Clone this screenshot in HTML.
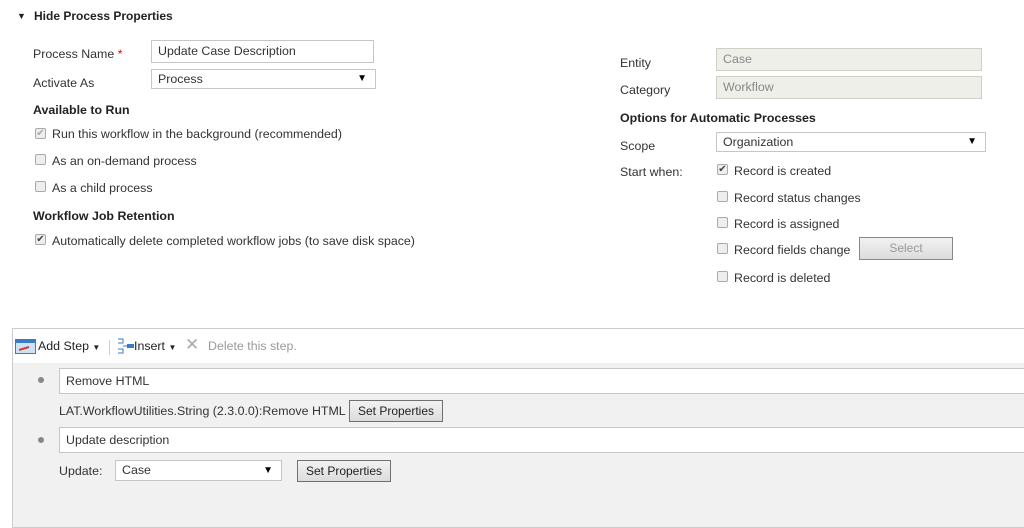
<!DOCTYPE html>
<html><head><style>
*{margin:0;padding:0;box-sizing:border-box}
body{width:1024px;height:497px;background:#fff;font-family:"Liberation Sans",sans-serif;font-size:12.4px;color:#333;position:relative;overflow:hidden}
.a{position:absolute;white-space:nowrap;line-height:14px}
.b{font-weight:bold;color:#222}
.in{position:absolute;border:1px solid #c6c6c6;background:#fff;padding-left:6px;line-height:20px}
.ro{background:#efefea;color:#888;border-color:#cfcfc8}
.cb{position:absolute;width:11px;height:11px;border:1px solid #aaa;border-radius:2px;background:#eee;font-size:10px;line-height:9px;text-align:center;color:#444}
.arr{position:absolute;right:8px;top:0;font-size:10px;color:#000}
.btn{position:absolute;border:1px solid #707070;background:linear-gradient(#f2f2f2,#dcdcdc);text-align:center;font-size:12px;color:#222}
</style></head><body>
<div class="a b" style="left:17px;top:9px;font-size:9px">&#9660;</div>
<div class="a b" style="left:34px;top:9px;font-size:12px">Hide Process Properties</div>

<div class="a" style="left:33px;top:47px">Process Name <span style="color:#e00">*</span></div>
<div class="in" style="left:151px;top:40px;width:223px;height:23px">Update Case Description</div>
<div class="a" style="left:33px;top:76px">Activate As</div>
<div class="in" style="left:151px;top:69px;width:225px;height:20px;line-height:18px;padding-left:6px">Process<span class="arr">&#9660;</span></div>
<div class="a b" style="left:33px;top:103px">Available to Run</div>
<div class="cb" style="left:35px;top:128px;color:#aaa">&#10004;</div><div class="a" style="left:52px;top:127px">Run this workflow in the background (recommended)</div>
<div class="cb" style="left:35px;top:154px"></div><div class="a" style="left:52px;top:154px">As an on-demand process</div>
<div class="cb" style="left:35px;top:181px"></div><div class="a" style="left:52px;top:181px">As a child process</div>
<div class="a b" style="left:33px;top:209px">Workflow Job Retention</div>
<div class="cb" style="left:35px;top:234px">&#10004;</div><div class="a" style="left:52px;top:234px">Automatically delete completed workflow jobs (to save disk space)</div>

<div class="a" style="left:620px;top:56px">Entity</div>
<div class="in ro" style="left:716px;top:48px;width:266px;height:23px">Case</div>
<div class="a" style="left:620px;top:83px">Category</div>
<div class="in ro" style="left:716px;top:76px;width:266px;height:23px">Workflow</div>
<div class="a b" style="left:620px;top:111px">Options for Automatic Processes</div>
<div class="a" style="left:620px;top:139px">Scope</div>
<div class="in" style="left:716px;top:132px;width:270px;height:20px;line-height:18px">Organization<span class="arr">&#9660;</span></div>
<div class="a" style="left:620px;top:165px">Start when:</div>
<div class="cb" style="left:717px;top:164px">&#10004;</div><div class="a" style="left:734px;top:164px">Record is created</div>
<div class="cb" style="left:717px;top:191px"></div><div class="a" style="left:734px;top:191px">Record status changes</div>
<div class="cb" style="left:717px;top:217px"></div><div class="a" style="left:734px;top:217px">Record is assigned</div>
<div class="cb" style="left:717px;top:243px"></div><div class="a" style="left:734px;top:243px">Record fields change</div>
<div class="btn" style="left:859px;top:237px;width:94px;height:23px;line-height:21px;color:#999;border-color:#888">Select</div>
<div class="cb" style="left:717px;top:271px"></div><div class="a" style="left:734px;top:271px">Record is deleted</div>

<div style="position:absolute;left:12px;top:328px;width:1020px;height:200px;border:1px solid #ccc;background:#f1f1f1"></div>
<div style="position:absolute;left:13px;top:329px;width:1011px;height:34px;background:#fff"></div>
<svg style="position:absolute;left:15px;top:339px" width="21" height="15"><rect x="0.5" y="0.5" width="20" height="14" fill="#cfe3f7" stroke="#3a7cc4"/><rect x="1" y="1" width="19" height="3" fill="#3a7cc4"/><line x1="4" y1="11" x2="14" y2="8" stroke="#d04030" stroke-width="2"/></svg>
<div class="a" style="left:38px;top:339px;color:#222">Add Step <span style="font-size:8px">&#9660;</span></div>
<div style="position:absolute;left:109px;top:340px;width:1px;height:15px;background:#ccc"></div>
<svg style="position:absolute;left:117px;top:338px" width="18" height="16"><path d="M1 1h5v4H1M1 11h5v4H1M6 8h4" stroke="#3a7cc4" fill="none"/><rect x="10" y="6" width="7" height="4" fill="#3a7cc4"/></svg>
<div class="a" style="left:134px;top:339px;color:#222">Insert <span style="font-size:8px">&#9660;</span></div>
<div class="a" style="left:185px;top:336px;font-size:17px;color:#aaa;line-height:18px">&#10005;</div>
<div class="a" style="left:208px;top:339px;color:#999">Delete this step.</div>

<div style="position:absolute;left:38px;top:377px;width:6px;height:6px;border-radius:50%;background:#888"></div>
<div class="in" style="left:59px;top:368px;width:970px;height:26px;line-height:24px">Remove HTML</div>
<div class="a" style="left:59px;top:404px">LAT.WorkflowUtilities.String (2.3.0.0):Remove HTML</div>
<div class="btn" style="left:349px;top:400px;width:94px;height:22px;line-height:20px">Set Properties</div>
<div style="position:absolute;left:38px;top:437px;width:6px;height:6px;border-radius:50%;background:#888"></div>
<div class="in" style="left:59px;top:427px;width:970px;height:26px;line-height:24px">Update description</div>
<div class="a" style="left:59px;top:464px">Update:</div>
<div class="in" style="left:115px;top:460px;width:167px;height:21px;line-height:19px">Case<span class="arr">&#9660;</span></div>
<div class="btn" style="left:297px;top:460px;width:94px;height:22px;line-height:20px">Set Properties</div>
</body></html>
